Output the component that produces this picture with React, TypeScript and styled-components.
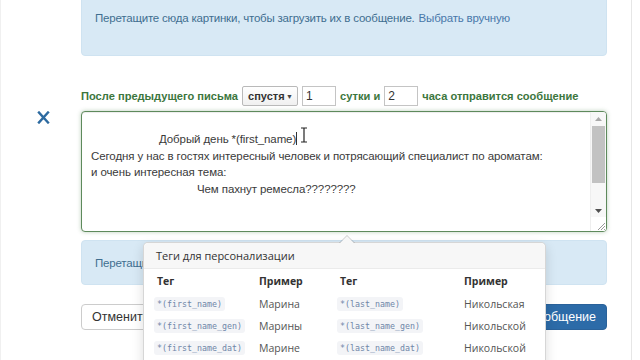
import React from 'react';
import styled, { createGlobalStyle } from 'styled-components';

const GlobalStyle = createGlobalStyle`
    html, body {
        margin: 0;
        padding: 0;
        background: #ffffff;
    }
    body {
        font-family: "Liberation Sans", Arial, sans-serif;
        font-size: 12px;
        color: #333333;
        overflow: hidden;
    }
`;

const Page = styled.div`
    width: 632px;
    height: 360px;
    border-left: 1px solid #f0f0f0;
    border-right: 1px solid #e6e6e6;
    box-sizing: border-box;
    display: grid;
    grid-template-columns: 80px 526px;
    align-content: start;
    overflow: hidden;
`;

const Alert = styled.div<{ $top: number; $height: number }>`
    grid-column: 2;
    margin-top: ${({ $top }) => $top}px;
    height: ${({ $height }) => $height}px;
    box-sizing: border-box;
    padding: 0 13px;
    display: flex;
    align-items: center;
    background: #d8e9f5;
    border: 1px solid #cfe3f1;
    border-radius: 4px;
    color: #3f6e90;
    font-size: 11.5px;
    letter-spacing: -0.2px;
    white-space: nowrap;

    a {
        color: #4878aa;
        text-decoration: none;
        margin-left: 4px;
    }
`;

const LabelRow = styled.div`
    grid-column: 2;
    margin-top: 30px;
    height: 20px;
    display: flex;
    align-items: center;
    gap: 4px;
    color: #3c763d;
    font-weight: bold;
    font-size: 11.1px;
    white-space: nowrap;
`;

const Select = styled.div`
    height: 20px;
    width: 56px;
    box-sizing: border-box;
    padding: 0 4px 0 5px;
    display: flex;
    align-items: center;
    justify-content: space-between;
    border: 1px solid #b9b9b9;
    border-radius: 2px;
    background: linear-gradient(#ffffff, #f0f0f0);
    color: #333;
    font-size: 11px;
    font-weight: bold;

    span {
        font-size: 7px;
        color: #444;
    }
`;

const NumInput = styled.div`
    width: 34px;
    height: 20px;
    box-sizing: border-box;
    padding: 0 3px;
    display: flex;
    align-items: center;
    border: 1px solid #c4c4c4;
    background: #fff;
    color: #333;
    font-weight: normal;
    font-size: 12px;
`;

const Gutter = styled.div`
    grid-column: 1;
    margin-top: 5px;
    display: flex;
    justify-content: center;
    padding-left: 4px;
    color: #2d6aa0;
`;

const EditorWrap = styled.div`
    grid-column: 2;
    margin-top: 5px;
    position: relative;
`;

const Editor = styled.div`
    height: 121px;
    box-sizing: border-box;
    display: flex;
    border: 1px solid #5e8a5c;
    border-radius: 4px;
    box-shadow: inset 0 1px 1px rgba(0, 0, 0, 0.075), 0 0 4px rgba(60, 118, 61, 0.35);
    background: #fff;
    overflow: hidden;
`;

const EditorText = styled.div`
    flex: 1;
    position: relative;
    padding: 19px 0 0 9px;
    font-size: 11.5px;
    line-height: 16.5px;
    color: #3a3a3a;
    letter-spacing: -0.1px;
`;

const TextLine = styled.div<{ $indent?: number }>`
    padding-left: ${({ $indent }) => $indent || 0}px;
    white-space: nowrap;
`;

const Caret = styled.span`
    display: inline-block;
    width: 1px;
    height: 13px;
    background: #333;
    vertical-align: -2px;
`;

const Cursor = styled.svg`
    position: absolute;
    left: 218px;
    top: 15px;
`;

const ScrollBar = styled.div`
    width: 15px;
    display: flex;
    flex-direction: column;
    background: #f7f7f7;
    border-left: 1px solid #eeeeee;
`;

const ScrollArrow = styled.div`
    height: 13px;
    display: flex;
    align-items: center;
    justify-content: center;
`;

const Thumb = styled.div`
    margin: 1px 1px 0;
    height: 57px;
    background: #c2c2c2;
`;

const Spacer = styled.div`
    flex: 1;
`;

const Corner = styled.div`
    height: 14px;
    background: #fff;
    display: flex;
    align-items: flex-end;
    justify-content: flex-end;
`;

const Popover = styled.div`
    position: absolute;
    left: 62px;
    top: 131px;
    width: 401px;
    height: 140px;
    background: #fff;
    border: 1px solid rgba(0, 0, 0, 0.16);
    border-radius: 5px;
    box-shadow: 0 4px 12px rgba(0, 0, 0, 0.14);
    z-index: 2;

    &::before, &::after {
        content: "";
        position: absolute;
        left: 195px;
        width: 0;
        height: 0;
        border-style: solid;
    }
    &::before {
        top: -8px;
        border-width: 0 8px 8px 8px;
        border-color: transparent transparent rgba(0, 0, 0, 0.2) transparent;
    }
    &::after {
        top: -7px;
        left: 196px;
        border-width: 0 7px 7px 7px;
        border-color: transparent transparent #f7f7f7 transparent;
    }
`;

const PopoverTitle = styled.div`
    height: 26px;
    box-sizing: border-box;
    padding: 0 12px;
    display: flex;
    align-items: center;
    background: #f7f7f7;
    border-bottom: 1px solid #ebebeb;
    border-radius: 5px 5px 0 0;
    font-family: "Open Sans", "Noto Sans", sans-serif;
    font-size: 11px;
    color: #333;
`;

const TagGrid = styled.div`
    display: grid;
    grid-template-columns: 102px 81px 124px 1fr;
    grid-auto-rows: 22px;
    padding: 2px 0 0 13px;
    font-family: "Open Sans", "Noto Sans", sans-serif;
    font-size: 10.5px;
    color: #444;
`;

const Cell = styled.div<{ $head?: boolean }>`
    display: flex;
    align-items: center;
    font-weight: ${({ $head }) => ($head ? 'bold' : 'normal')};
    color: ${({ $head }) => ($head ? '#333' : '#555')};
    height: ${({ $head }) => ($head ? '19px' : '22px')};
    align-self: ${({ $head }) => ($head ? 'start' : 'stretch')};
`;

const Code = styled.code`
    margin-left: -3px;
    padding: 2px 3px;
    border-radius: 3px;
    background: #f3f4f7;
    color: #6f86a8;
    font-family: "DejaVu Sans Mono", "Liberation Mono", monospace;
    font-size: 8.3px;
`;

const ButtonRow = styled.div`
    grid-column: 2;
    margin-top: 19px;
    height: 26px;
    display: flex;
    justify-content: space-between;
`;

const Button = styled.div<{ $primary?: boolean }>`
    height: 26px;
    box-sizing: border-box;
    padding: 0 10px;
    display: flex;
    align-items: center;
    border-radius: 4px;
    font-size: 12.5px;
    border: 1px solid ${({ $primary }) => ($primary ? '#2a629a' : '#cccccc')};
    background: ${({ $primary }) => ($primary ? '#2c6ba8' : '#ffffff')};
    color: ${({ $primary }) => ($primary ? '#ffffff' : '#333333')};
`;

const tags = [
    ['*(first_name)', 'Марина', '*(last_name)', 'Никольская'],
    ['*(first_name_gen)', 'Марины', '*(last_name_gen)', 'Никольской'],
    ['*(first_name_dat)', 'Марине', '*(last_name_dat)', 'Никольской'],
];

export default function App() {
    return (
        <>
            <GlobalStyle />
            <Page>
                <Alert $top={-20} $height={76}>
                    Перетащите сюда картинки, чтобы загрузить их в сообщение.
                    <a href="#">Выбрать вручную</a>
                </Alert>

                <LabelRow>
                    После предыдущего письма
                    <Select>спустя <span>▼</span></Select>
                    <NumInput>1</NumInput>
                    сутки и
                    <NumInput>2</NumInput>
                    часа отправится сообщение
                </LabelRow>

                <Gutter>
                    <svg width="13" height="13" viewBox="0 0 13 13">
                        <path d="M2 1.5 L11 11.5 M11 1.5 L2 11.5" stroke="#2d6aa0" strokeWidth="2.4" strokeLinecap="square" />
                    </svg>
                </Gutter>
                <EditorWrap>
                    <Editor>
                        <EditorText>
                            <TextLine $indent={68}>Добрый день *(first_name)<Caret /></TextLine>
                            <TextLine>Сегодня у нас в гостях интересный человек и потрясающий специалист по ароматам:</TextLine>
                            <TextLine>и очень интересная тема:</TextLine>
                            <TextLine $indent={106}>Чем пахнут ремесла????????</TextLine>
                            <Cursor width="8" height="16" viewBox="0 0 8 16">
                                <path d="M1 1 H7 M4 1 V15 M1 15 H7" stroke="#222" strokeWidth="1.2" fill="none" />
                            </Cursor>
                        </EditorText>
                        <ScrollBar>
                            <ScrollArrow>
                                <svg width="7" height="4" viewBox="0 0 7 4"><path d="M0 4 L3.5 0 L7 4 Z" fill="#a8a8a8" /></svg>
                            </ScrollArrow>
                            <Thumb />
                            <Spacer />
                            <ScrollArrow>
                                <svg width="7" height="4" viewBox="0 0 7 4"><path d="M0 0 L3.5 4 L7 0 Z" fill="#505050" /></svg>
                            </ScrollArrow>
                            <Corner>
                                <svg width="10" height="10" viewBox="0 0 10 10">
                                    <path d="M9 2 L2 9 M9 5 L5 9 M9 8 L8 9" stroke="#9a9a9a" strokeWidth="1" />
                                </svg>
                            </Corner>
                        </ScrollBar>
                    </Editor>
                    <Popover>
                        <PopoverTitle>Теги для персонализации</PopoverTitle>
                        <TagGrid>
                            <Cell $head>Тег</Cell>
                            <Cell $head>Пример</Cell>
                            <Cell $head>Тег</Cell>
                            <Cell $head>Пример</Cell>
                            {tags.map((row) => (
                                <React.Fragment key={row[0]}>
                                    <Cell><Code>{row[0]}</Code></Cell>
                                    <Cell>{row[1]}</Cell>
                                    <Cell><Code>{row[2]}</Code></Cell>
                                    <Cell>{row[3]}</Cell>
                                </React.Fragment>
                            ))}
                        </TagGrid>
                    </Popover>
                </EditorWrap>

                <Alert $top={8} $height={45}>
                    Перетащите сюда картинки, чтобы загрузить их в сообщение.
                    <a href="#">Выбрать вручную</a>
                </Alert>

                <ButtonRow>
                    <Button>Отменить</Button>
                    <Button $primary>Сохранить сообщение</Button>
                </ButtonRow>
            </Page>
        </>
    );
}
